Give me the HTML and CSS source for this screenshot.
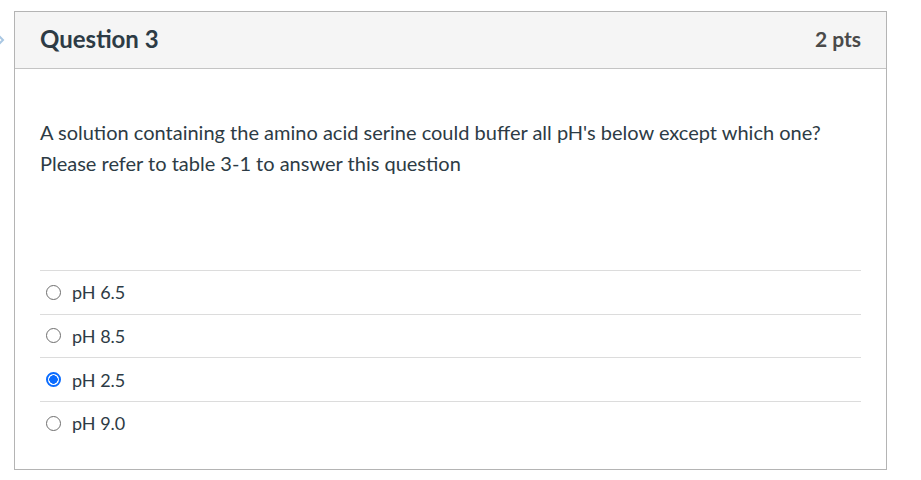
FILE: index.html
```html
<!DOCTYPE html>
<html lang="en">
<head>
<meta charset="utf-8">
<link rel="stylesheet" href="styles.css">
</head>
<body>
<div class="page">
  <svg class="nav-arrow" width="6" height="10" viewBox="0 0 6 10"><path d="M0 1 L4 5 L0 9" fill="none" stroke="#a9c7e3" stroke-width="2"/></svg>
  <div class="question">
    <div class="q-header">
      <h2 class="q-title">Question 3</h2>
      <span class="q-pts">2 pts</span>
    </div>
    <div class="q-body">
      <p class="q-text">A solution containing the amino acid serine could buffer all pH's below except which one?<br>Please refer to table 3-1 to answer this question</p>
      <ul class="answers">
        <li class="answer"><span class="radio"></span><span class="label">pH 6.5</span></li>
        <li class="answer"><span class="radio"></span><span class="label">pH 8.5</span></li>
        <li class="answer"><span class="radio checked"></span><span class="label">pH 2.5</span></li>
        <li class="answer"><span class="radio"></span><span class="label">pH 9.0</span></li>
      </ul>
    </div>
  </div>
</div>
</body>
</html>
```
FILE: styles.css
```css
* { box-sizing: border-box; }
html, body { margin: 0; padding: 0; background: #fff; }
body { font-family: Lato, "Noto Sans", sans-serif; color: #2d3b45; }
.page { position: relative; padding: 11px 0 0 14px; width: 921px; height: 480px; }
.nav-arrow { position: absolute; left: -1px; top: 35px; }
.question { width: 873px; height: 459px; border: 1px solid #b4b4b4; }
.q-header {
  display: flex; justify-content: space-between; align-items: center;
  height: 57px; padding: 0 25px 4px; background: #f5f5f5;
  border-bottom: 1px solid #c4c4c4;
}
.q-title { margin: 0; font-size: 24px; font-weight: 700; color: #2d3b45; }
.q-pts { font-size: 21px; font-weight: 700; color: #4a4a4a; }
.q-body { padding: 0 25px; }
.q-text { margin: 0; padding-top: 48px; font-size: 20px; line-height: 31px; height: 201px; }
.answers { list-style: none; margin: 0; padding: 0; }
.answer {
  display: flex; align-items: center; height: 43.67px;
  border-top: 1px solid #dcdcdc; font-size: 18px;
}
.radio {
  width: 15px; height: 15px; border: 1px solid #6e6e6e; border-radius: 50%;
  margin-left: 6px; margin-right: 11px; flex: none; background: #fff;
}
.radio.checked { border: 2px solid #0a6cff; background: radial-gradient(circle, #0a6cff 0 4px, #fff 4.5px); }
.label { color: #2d3b45; }
```
